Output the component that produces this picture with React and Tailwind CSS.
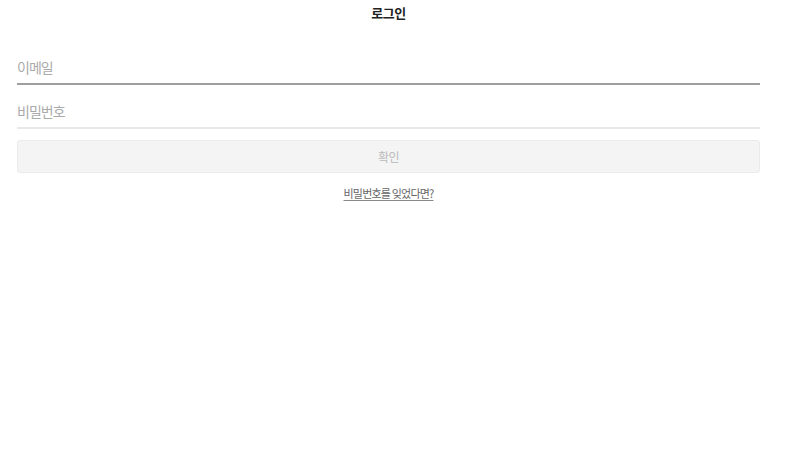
import React from "react";

export default function App() {
  return (
    <div
      className="w-[800px] h-[466px] bg-white pl-[17px] pr-[40px]"
      style={{ fontFamily: '"Noto Sans CJK KR", "Noto Sans", sans-serif' }}
    >
      <h1 className="text-center text-[13px] tracking-[-0.5px] font-bold text-[#222] pt-[3px] leading-[20px]">로그인</h1>

      <div className="mt-[30px]">
        <input
          autoFocus
          type="email"
          placeholder="이메일"
          className="w-full h-[32px] pb-[2px] text-[14px] tracking-[-1px] text-[#333] placeholder-[#aaa] caret-[#2f7ae5] outline-none border-b-2 border-[#9e9e9e]"
        />
      </div>

      <div className="mt-[12px]">
        <input
          type="password"
          placeholder="비밀번호"
          className="w-full h-[32px] pb-[2px] text-[14px] tracking-[-1px] text-[#333] placeholder-[#aaa] outline-none border-b-2 border-[#e8e8e8]"
        />
      </div>

      <button className="mt-[11px] w-full h-[33px] rounded-[3px] bg-[#f4f4f4] border border-[#ebebeb] text-[12px] tracking-[-0.5px] text-[#bbb]">
        확인
      </button>

      <div className="mt-[8px] text-center leading-[20px]">
        <a href="#" className="text-[11px] tracking-[-0.8px] text-[#666] underline underline-offset-2 decoration-[#888]">
          비밀번호를 잊었다면?
        </a>
      </div>
    </div>
  );
}
